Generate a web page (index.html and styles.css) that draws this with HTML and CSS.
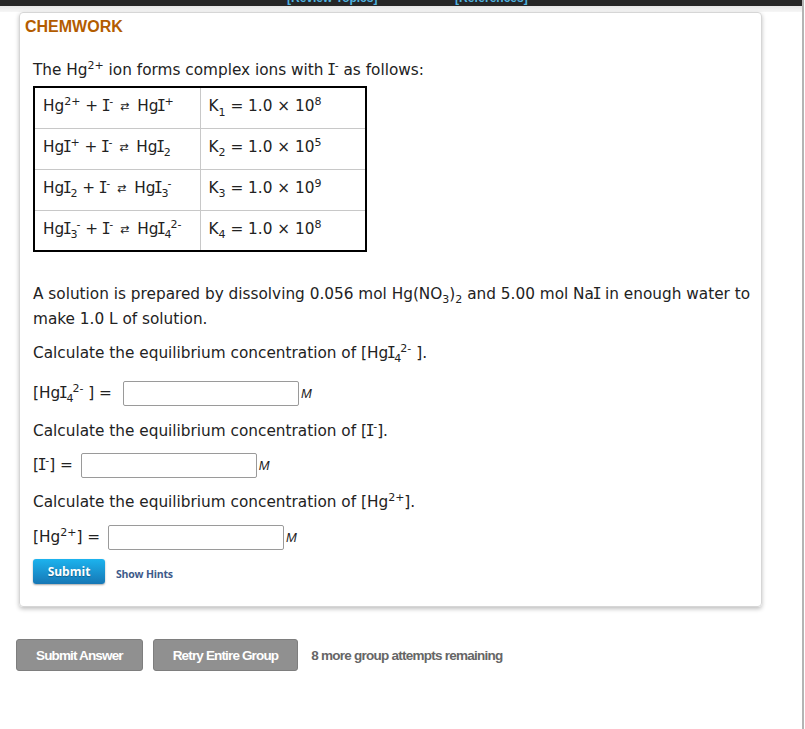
FILE: index.html
```html
<!DOCTYPE html>
<html lang="en">
<head>
  <meta charset="UTF-8" />
  <title>Chemwork</title>
  <link rel="stylesheet" href="styles.css">
</head>
<body>
  <div class="frame">
    <div class="topbar">
      <a class="top-link review" href="#">[Review Topics]</a>
      <a class="top-link refs" href="#">[References]</a>
    </div>
    <div class="topshade"></div>

    <div class="card">
      <h1 class="brand">CHEMWORK</h1>
      <div class="question">
        <p class="intro">The Hg<sup>2+</sup> ion forms complex ions with <span class="iod">I</span><sup>-</sup> as follows:</p>

        <table class="eq-table">
          <tr>
            <td>Hg<sup>2+</sup> + <span class="iod">I</span><sup>-</sup> <span class="arrow">&#8644;</span> Hg<span class="iod">I</span><sup>+</sup></td>
            <td>K<sub>1</sub> = 1.0 &times; 10<sup>8</sup></td>
          </tr>
          <tr>
            <td>Hg<span class="iod">I</span><sup>+</sup> + <span class="iod">I</span><sup>-</sup> <span class="arrow">&#8644;</span> Hg<span class="iod">I</span><sub>2</sub></td>
            <td>K<sub>2</sub> = 1.0 &times; 10<sup>5</sup></td>
          </tr>
          <tr>
            <td>Hg<span class="iod">I</span><sub>2</sub> + <span class="iod">I</span><sup>-</sup> <span class="arrow">&#8644;</span> Hg<span class="iod">I</span><sub>3</sub><sup class="after-sub">-</sup></td>
            <td>K<sub>3</sub> = 1.0 &times; 10<sup>9</sup></td>
          </tr>
          <tr>
            <td>Hg<span class="iod">I</span><sub>3</sub><sup class="after-sub">-</sup> + <span class="iod">I</span><sup>-</sup> <span class="arrow">&#8644;</span> Hg<span class="iod">I</span><sub>4</sub><sup class="after-sub">2-</sup></td>
            <td>K<sub>4</sub> = 1.0 &times; 10<sup>8</sup></td>
          </tr>
        </table>

        <p class="setup">A solution is prepared by dissolving 0.056 mol Hg(NO<sub>3</sub>)<sub>2</sub> and 5.00 mol Na<span class="iod">I</span> in enough water to make 1.0 L of solution.</p>

        <p class="ask ask-1">Calculate the equilibrium concentration of [Hg<span class="iod">I</span><sub>4</sub><sup class="after-sub">2-</sup> ].</p>
        <div class="answer answer-1">
          <span>[Hg<span class="iod">I</span><sub>4</sub><sup class="after-sub">2-</sup> ] =</span>
          <input type="text" class="box" />
          <span class="unit">M</span>
        </div>

        <p class="ask ask-2">Calculate the equilibrium concentration of [<span class="iod">I</span><sup>-</sup>].</p>
        <div class="answer answer-2">
          <span>[<span class="iod">I</span><sup>-</sup>] =</span>
          <input type="text" class="box" />
          <span class="unit">M</span>
        </div>

        <p class="ask ask-3">Calculate the equilibrium concentration of [Hg<sup>2+</sup>].</p>
        <div class="answer answer-3">
          <span>[Hg<sup>2+</sup>] =</span>
          <input type="text" class="box" />
          <span class="unit">M</span>
        </div>

        <div class="actions">
          <button class="btn-submit">Submit</button>
          <a class="hints" href="#">Show Hints</a>
        </div>
      </div>
    </div>

    <div class="group-actions">
      <button class="btn-gray">Submit Answer</button>
      <button class="btn-gray">Retry Entire Group</button>
      <span class="attempts">8 more group attempts remaining</span>
    </div>
  </div>
</body>
</html>
```

FILE: styles.css
```css
* {
  box-sizing: border-box;
}

body {
  margin: 0;
  background: #fff;
  font-family: "DejaVu Sans", Verdana, sans-serif;
  color: #222;
}

.frame {
  width: 804px;
  min-height: 729px;
  border-right: 2px solid #b4b4b4;
}

.topbar {
  height: 6px;
  background: #262626;
  overflow: hidden;
  position: relative;
}

.top-link {
  position: absolute;
  top: -9px;
  font: bold 12px "Liberation Sans", Arial, sans-serif;
  color: #4fb3e0;
  text-decoration: none;
}

.review { left: 287px; }
.refs { left: 455px; }

.topshade {
  height: 6px;
  background: linear-gradient(#e6e6e6, #f6f6f6);
}

.card {
  margin: 0 40px 0 19px;
  border: 1px solid #d6d6d6;
  border-radius: 4px;
  box-shadow: 0 2px 4px rgba(0,0,0,0.25);
  padding: 5px 3px 16px 5px;
  min-height: 595px;
}

.brand {
  margin: 0;
  font: bold 16px "Liberation Sans", Arial, sans-serif;
  color: #b35c00;
}

.question {
  padding: 0 0 0 8px;
  font-size: 15.3px;
  line-height: 25px;
}

.question p {
  margin: 0;
}

sup, sub {
  font-size: 72%;
  line-height: 0;
  vertical-align: baseline;
  position: relative;
}

sup {
  top: -0.55em;
}

sub {
  top: 0.4em;
}

/* superscript right after a subscript */
.after-sub {
  margin-left: -1px;
}

/* Verdana's I has serifs; the mono I is the nearest match installed */
.iod {
  font-family: "DejaVu Sans Mono", monospace;
  margin-left: -1.5px;
  margin-right: -1.5px;
}

.intro {
  margin-top: 22px !important;
}

.eq-table {
  margin-top: 3px;
  border-collapse: collapse;
  border: 2px solid #000;
}

.eq-table td {
  border: 1px solid #c8c8c8;
  padding: 6px 8px 8px 8px;
  height: 41px;
  white-space: nowrap;
}

.eq-table td:first-child {
  width: 166px;
}

.eq-table td:last-child {
  width: 166px;
}

.arrow {
  font-size: 11px;
  padding: 0 3px 0 2px;
  vertical-align: 1px;
}

.setup {
  margin-top: 30px !important;
}

.ask-1 { margin-top: 9px !important; }
.ask-2 { margin-top: 13px !important; }
.ask-3 { margin-top: 12px !important; }

.answer {
  display: flex;
  align-items: center;
  height: 25px;
}

.answer-1 { margin-top: 15px; }
.answer-2 { margin-top: 9px; }
.answer-3 { margin-top: 10px; }

.box {
  margin: 0 2px 0 8px;
  width: 176px;
  height: 25px;
  border: 1px solid #9a9a9a;
  border-radius: 2px;
}

.answer-1 .box {
  margin-left: 11px;
}

.unit {
  font-style: italic;
  font-size: 13px;
  font-family: "Liberation Sans", Arial, sans-serif;
}

.actions {
  display: flex;
  align-items: center;
  gap: 11px;
  margin-top: 9px;
}

.btn-submit {
  width: 72px;
  height: 25px;
  border: none;
  border-radius: 3px;
  background: linear-gradient(#1cb3ee, #1677b5);
  box-shadow: 0 1px 2px rgba(0,0,0,0.35);
  color: #fff;
  font: bold 12px "Open Sans", sans-serif;
  text-shadow: 0 1px 1px rgba(0,0,0,0.3);
}

.hints {
  font: bold 10.5px "Open Sans", sans-serif;
  letter-spacing: -0.2px;
  color: #3d5a8a;
  text-decoration: none;
  margin-top: 4px;
}

.group-actions {
  display: flex;
  align-items: center;
  gap: 10px;
  padding: 32px 0 0 16px;
}

.btn-gray {
  height: 32px;
  padding: 0 19px;
  border: 1px solid #7e7e7e;
  border-radius: 3px;
  background: #909090;
  color: #fff;
  font: bold 13.5px "Liberation Sans", Arial, sans-serif;
  letter-spacing: -0.85px;
}

.attempts {
  margin-left: 3px;
  font: bold 13.5px "Liberation Sans", Arial, sans-serif;
  color: #666;
  letter-spacing: -0.75px;
}
```
